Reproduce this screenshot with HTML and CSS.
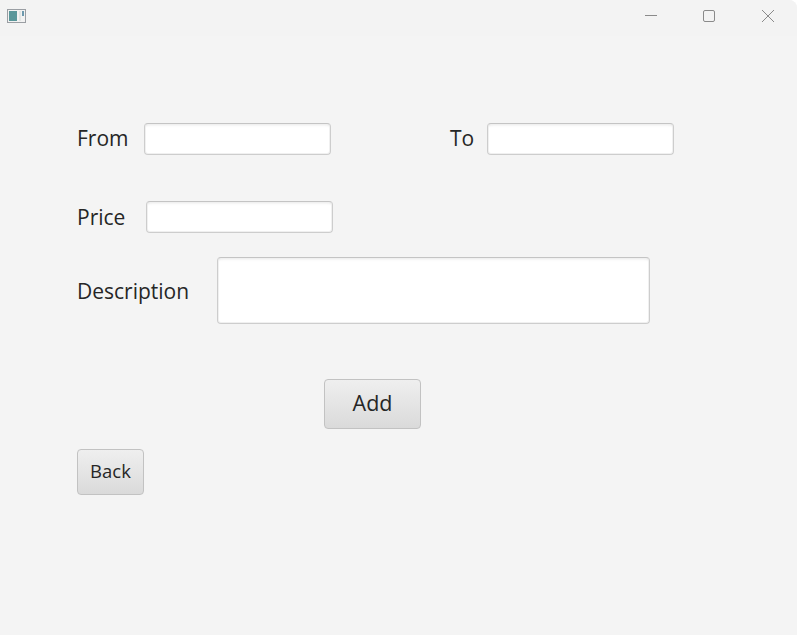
FILE: index.html
```html
<!DOCTYPE html>
<html lang="en">
<head>
    <meta charset="UTF-8">
    <meta name="viewport" content="width=device-width, initial-scale=1.0">
    <title>Add Ticket</title>
    <link rel="stylesheet" href="styles.css">
</head>
<body>
<div class="window">
    <div class="titlebar">
        <svg class="app-icon" width="20" height="16" viewBox="0 0 20 16">
            <rect x="0.5" y="1.5" width="18" height="13" fill="#f2f2f2" stroke="#9a9ea3"/>
            <rect x="2" y="3" width="8" height="10" fill="#5a979a"/>
            <rect x="15" y="3" width="2" height="5" fill="#6c99ad"/>
            <rect x="12" y="3" width="2" height="10" fill="#e2e6e4"/>
        </svg>
        <div class="controls">
            <svg class="control" width="58" height="32" viewBox="0 0 58 32">
                <path d="M15 15.5h12" stroke="#8a8a8a" fill="none"/>
            </svg>
            <svg class="control" width="58" height="32" viewBox="0 0 58 32">
                <rect x="15.5" y="10.5" width="11" height="11" rx="1.5" stroke="#8a8a8a" fill="none"/>
            </svg>
            <svg class="control" width="51" height="32" viewBox="0 0 51 32">
                <path d="M16 10l12 12M28 10l-12 12" stroke="#8a8a8a" fill="none"/>
            </svg>
        </div>
    </div>

    <div class="form">
        <div class="row row-route">
            <div class="field field-from">
                <label class="label">From</label>
                <input class="input" type="text">
            </div>
            <div class="field field-to">
                <label class="label">To</label>
                <input class="input" type="text">
            </div>
        </div>
        <div class="row row-price">
            <div class="field field-price">
                <label class="label">Price</label>
                <input class="input" type="text">
            </div>
        </div>
        <div class="row row-description">
            <div class="field field-description">
                <label class="label">Description</label>
                <textarea class="input textarea"></textarea>
            </div>
        </div>
        <div class="row row-add">
            <button class="btn btn-add">Add</button>
        </div>
        <div class="row row-back">
            <button class="btn btn-back">Back</button>
        </div>
    </div>
</div>
</body>
</html>
```
FILE: styles.css
```css
html,
body {
    margin: 0;
    padding: 0;
    height: 100%;
    background: #fff;
}

.window {
    height: 635px;
    background: #f4f4f4;
    border-top-right-radius: 8px;
    font-family: "Open Sans", "Noto Sans", sans-serif;
    color: #262626;
    overflow: hidden;
}

.titlebar {
    display: flex;
    justify-content: space-between;
    align-items: flex-start;
    height: 36px;
    background: #f3f3f3;
}

.app-icon {
    margin: 8px 0 0 7px;
}

.controls {
    display: flex;
}

.form {
    padding: 87px 0 0 77px;
}

.row {
    display: flex;
}

.field {
    display: flex;
    align-items: center;
}

.label {
    font-size: 21px;
    padding-bottom: 2px;
}

.input {
    box-sizing: border-box;
    display: block;
    width: 187px;
    height: 32px;
    margin: 0;
    padding: 0;
    background: #fff;
    border: 1px solid #cdcdcd;
    border-top-color: #c4c4c4;
    border-radius: 4px;
    box-shadow: inset 0 0 0 1px #f0f0f0, inset 0 3px 3px -2px #e4e4e4;
    outline: none;
    resize: none;
}

.field-from .label {
    width: 67px;
}

.field-to {
    margin-left: 119px;
}

.field-to .label {
    width: 37px;
}

.row-price {
    margin-top: 46px;
}

.field-price .label {
    width: 69px;
    padding-bottom: 0;
}

.row-description {
    margin-top: 24px;
}

.field-description {
    align-items: flex-start;
}

.field-description .label {
    width: 140px;
    margin-top: 20px;
}

.textarea {
    width: 433px;
    height: 67px;
}

.row-add {
    margin: 55px 0 0 247px;
}

.row-back {
    margin-top: 20px;
}

.btn {
    box-sizing: border-box;
    padding: 0 0 4px;
    font-family: inherit;
    color: #262626;
    background: linear-gradient(#efefef, #dadada);
    border: 1px solid #c2c2c2;
    border-radius: 4px;
}

.btn-add {
    width: 97px;
    height: 50px;
    padding-bottom: 3px;
    font-size: 21.5px;
}

.btn-back {
    width: 67px;
    height: 46px;
    font-size: 18.5px;
}
```
